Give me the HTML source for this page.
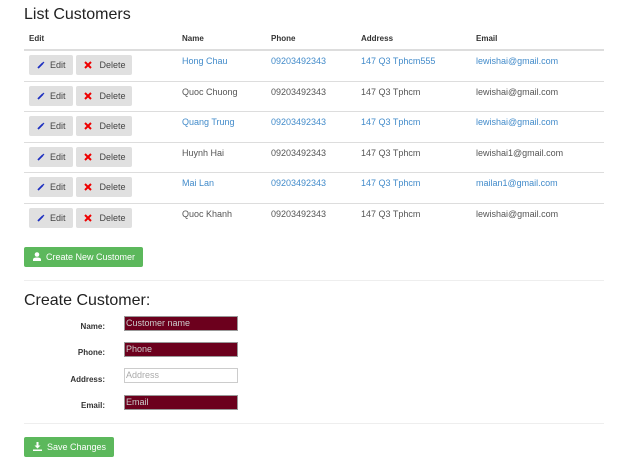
<!DOCTYPE html>
<html><head><style>
body{margin:0;background:#fff;font-family:"Liberation Sans",Arial,sans-serif;font-size:9px;color:#555;position:relative;width:640px;height:464px;overflow:hidden}
.a{position:absolute}
h1{position:absolute;left:24px;top:6px;margin:0;font-weight:normal;font-size:16px;color:#222}
.th{position:absolute;top:34px;font-weight:bold;font-size:8px;color:#333}
.line{position:absolute;left:24px;width:580px;height:1px;background:#ddd}
.btn{position:absolute;height:20px;background:#e0e0e0;border-radius:2px;font-size:9px;color:#444;line-height:20px}
.btn svg{vertical-align:-1px}
.cell{position:absolute;font-size:9px}
.blue{color:#428bca}
.g{position:absolute;background:#5cb85c;color:#fff;border-radius:2px;height:20px;line-height:20px;font-size:9px}
.g svg{vertical-align:-1px}
.lab{position:absolute;left:40px;width:65px;text-align:right;font-weight:bold;font-size:8px;color:#333}
.inp{position:absolute;left:124px;width:111px;height:13px;border:1px solid #999;background:#6c001d;color:#ccc;font-size:9px;line-height:13px;padding-left:1px;box-sizing:content-box}
</style></head><body>
<h1>List Customers</h1>
<div class="th" style="left:29px">Edit</div>
<div class="th" style="left:182px">Name</div>
<div class="th" style="left:271px">Phone</div>
<div class="th" style="left:361px">Address</div>
<div class="th" style="left:476px">Email</div>
<div class="line" style="top:49px;height:2px"></div>

<div id="rows"></div>
<script>
var d=[["Hong Chau","09203492343","147 Q3 Tphcm555","lewishai@gmail.com",1],
["Quoc Chuong","09203492343","147 Q3 Tphcm","lewishai@gmail.com",0],
["Quang Trung","09203492343","147 Q3 Tphcm","lewishai@gmail.com",1],
["Huynh Hai","09203492343","147 Q3 Tphcm","lewishai1@gmail.com",0],
["Mai Lan","09203492343","147 Q3 Tphcm","mailan1@gmail.com",1],
["Quoc Khanh","09203492343","147 Q3 Tphcm","lewishai@gmail.com",0]];
var h="";
var pen='<svg width="8" height="8" viewBox="0 0 8 8"><path d="M1 7L6 2" stroke="#1c2fc0" stroke-width="1.8"/><path d="M6 2L7 1" stroke="#1c2fc0" stroke-width="1.2"/></svg>';
var x='<svg width="8" height="8" viewBox="0 0 8 8"><path d="M1 1L7 7M7 1L1 7" stroke="#e00" stroke-width="2"/></svg>';
d.forEach(function(r,i){var y=51+i*30.6;var c=r[4]?" blue":"";
h+='<div class="btn" style="left:29px;width:44px;top:'+(y+4)+'px"><span style="margin-left:8px">'+pen+'</span>&nbsp; Edit</div>';
h+='<div class="btn" style="left:76px;width:56px;top:'+(y+4)+'px"><span style="margin-left:8px">'+x+'</span>&nbsp;&nbsp; Delete</div>';
h+='<div class="cell'+c+'" style="left:182px;top:'+(y+5)+'px">'+r[0]+'</div>';
h+='<div class="cell'+c+'" style="left:271px;top:'+(y+5)+'px">'+r[1]+'</div>';
h+='<div class="cell'+c+'" style="left:361px;top:'+(y+5)+'px">'+r[2]+'</div>';
h+='<div class="cell'+c+'" style="left:476px;top:'+(y+5)+'px">'+r[3]+'</div>';
if(i<5)h+='<div class="line" style="top:'+(y+29.5)+'px"></div>';});
document.getElementById("rows").innerHTML=h;
</script>
<div class="g" style="left:24px;top:247px;width:119px"><span style="margin-left:9px"><svg width="8" height="9" viewBox="0 0 8 9"><circle cx="4" cy="2.5" r="2.3" fill="#fff"/><path d="M0 9V7.5Q0 5.5 4 5.5Q8 5.5 8 7.5V9Z" fill="#fff"/></svg></span>&nbsp; Create New Customer</div>
<div class="line" style="top:280px;background:#eee"></div>
<div class="a" style="left:24px;top:292px;font-size:16px;color:#222">Create Customer:</div>
<div class="lab" style="top:322px">Name:</div>
<div class="lab" style="top:348px">Phone:</div>
<div class="lab" style="top:375px">Address:</div>
<div class="lab" style="top:401px">Email:</div>
<div class="inp" style="top:316px">Customer name</div>
<div class="inp" style="top:342px">Phone</div>
<div class="inp" style="top:368px;background:#fff;border-color:#ccc;color:#aaa">Address</div>
<div class="inp" style="top:395px">Email</div>
<div class="line" style="top:423px;background:#eee"></div>
<div class="g" style="left:24px;top:437px;width:90px"><span style="margin-left:9px"><svg width="9" height="9" viewBox="0 0 9 9"><path d="M3.5 0H5.5V3.5H7.5L4.5 6.5L1.5 3.5H3.5Z" fill="#fff"/><rect x="0" y="7.5" width="9" height="1.5" fill="#fff"/></svg></span>&nbsp; Save Changes</div>
</body></html>
